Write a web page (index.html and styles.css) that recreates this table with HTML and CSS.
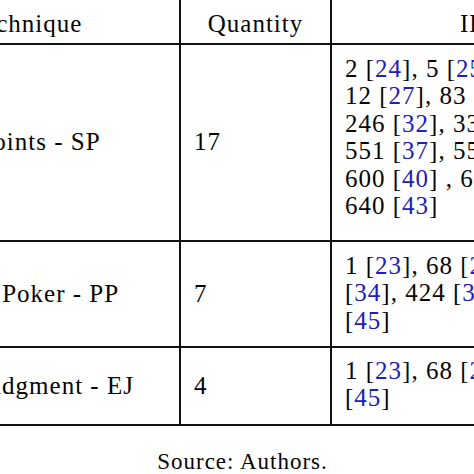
FILE: index.html
```html
<!DOCTYPE html>
<html>
<head>
<meta charset="utf-8">
<link rel="stylesheet" href="styles.css">
</head>
<body>
<div class="page">
  <table class="tbl">
    <colgroup>
      <col class="c1"><col class="c2"><col class="c3">
    </colgroup>
    <thead>
      <tr class="head">
        <th class="hc">Technique</th>
        <th class="hc">Quantity</th>
        <th class="hc hid">ID</th>
      </tr>
    </thead>
    <tbody>
      <tr class="r1">
        <td class="mid sp">Story Points - SP</td>
        <td class="mid">17</td>
        <td class="ids">2 [<a>24</a>], 5 [<a>25</a>], 9 [<a>26</a>],<br>12 [<a>27</a>], 83 [<a>28</a>], 131 [<a>29</a>],<br>246 [<a>32</a>], 337 [<a>33</a>], 412 [<a>35</a>],<br>551 [<a>37</a>], 553 [<a>38</a>], 570 [<a>39</a>],<br>600 [<a>40</a>] , 615 [<a>41</a>], 622 [<a>42</a>],<br>640 [<a>43</a>]</td>
      </tr>
      <tr class="r2">
        <td class="mid">Planning Poker - PP</td>
        <td class="mid">7</td>
        <td class="ids">1 [<a>23</a>], 68 [<a>26</a>], 246 [<a>32</a>],<br>[<a>34</a>], 424 [<a>36</a>], 600 [<a>40</a>],<br>[<a>45</a>]</td>
      </tr>
      <tr class="r3">
        <td class="mid">Expert Judgment - EJ</td>
        <td class="mid">4</td>
        <td class="ids">1 [<a>23</a>], 68 [<a>26</a>], 424 [<a>36</a>],<br>[<a>45</a>]</td>
      </tr>
    </tbody>
  </table>
  <p class="caption">Source: Authors.</p>
</div>
</body>
</html>
```
FILE: styles.css
```css
html, body {
  margin: 0;
  padding: 0;
  background: #ffffff;
}
body {
  width: 474px;
  height: 474px;
  overflow: hidden;
}
.page {
  width: 474px;
  height: 474px;
  overflow: hidden;
  font-family: "Liberation Serif", "Times New Roman", serif;
  color: #050505;
  font-size: 25px;
  letter-spacing: 1px;
  line-height: 27.5px;
}
.tbl {
  border-collapse: collapse;
  margin-left: -117px;
  table-layout: fixed;
  width: 947px;
}
.c1 { width: 296px; }
.c2 { width: 151px; }
.c3 { width: 500px; }
.tbl th, .tbl td {
  border-left: 2px solid #111111;
  border-right: 2px solid #111111;
  border-bottom: 2px solid #111111;
  padding: 0 0 0 13px;
  white-space: nowrap;
  font-weight: normal;
}
.tbl th.hc {
  text-align: center;
  padding: 10px 0 5px 0;
  height: 27.5px;
}
.tbl th.hc:first-child { padding-right: 12px; }
.tbl th.hid { padding-left: 128px; text-align: left; }
.mid {
  vertical-align: middle;
  text-align: left;
}
.tbl td.sp { padding-left: 27px; }
.ids {
  vertical-align: top;
  text-align: left;
}
.tbl td.ids { padding-top: 10px; }
.r1 td { height: 195px; }
.r2 td { height: 104px; }
.r3 td { height: 76px; }
.tbl .r1 td.ids { height: 185px; }
.tbl .r2 td.ids { height: 94px; }
.tbl .r3 td.ids { height: 67px; padding-top: 9px; }
.ids a {
  color: #2020b8;
  text-decoration: none;
}
.caption {
  margin: 22px 0 0 0;
  padding-left: 11px;
  text-align: center;
  font-size: 23px;
  letter-spacing: 1px;
}
```
